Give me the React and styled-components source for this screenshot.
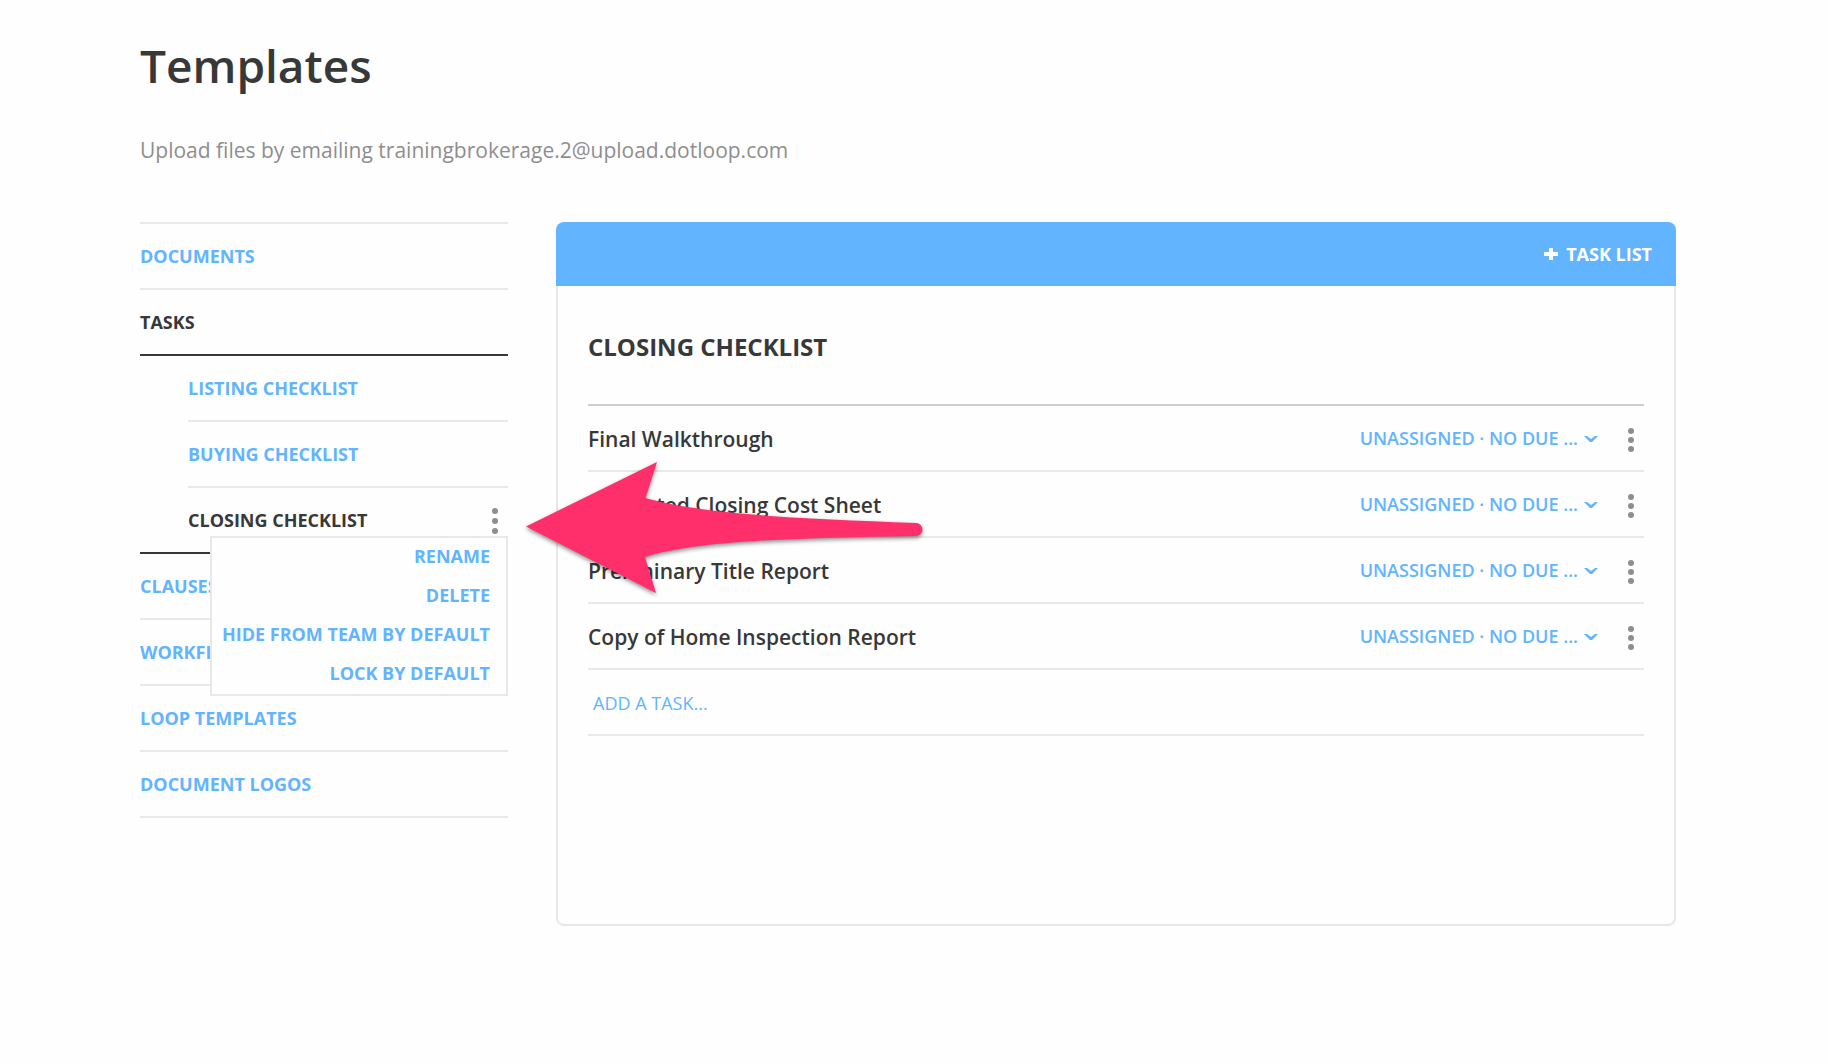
import React from "react";
import styled, { createGlobalStyle } from "styled-components";

const blue = "#62b4ff";
const ink = "#383838";
const line = "#e8e8e8";

const GlobalStyle = createGlobalStyle`
  *, *::before, *::after { box-sizing: border-box; }
  body {
    margin: 0;
    background: #fefefe;
    color: ${ink};
    font-family: "Open Sans", "Noto Sans", sans-serif;
    font-size: 18px;
  }
  button, input { font: inherit; color: inherit; border: 0; padding: 0; margin: 0; background: none; }
  button { cursor: pointer; }
  ul { list-style: none; margin: 0; padding: 0; }
  svg { display: block; flex: none; }
`;

const Page = styled.main`
  padding: 33px 152px 48px 140px;
`;

const Title = styled.h1`
  margin: 0 0 37px;
  font-size: 46px;
  line-height: 64px;
  font-weight: 600;
`;

const Subtitle = styled.p`
  margin: 0 0 56px;
  font-size: 21px;
  line-height: 32px;
  color: #8e8e8e;
`;

const Columns = styled.div`
  display: flex;
  align-items: flex-start;
  gap: 48px;
`;

const Sidebar = styled.nav`
  flex: 0 0 368px;
  border-top: 2px solid ${line};
`;

const NavRow = styled.div`
  position: relative;
  display: flex;
  align-items: center;
  justify-content: space-between;
  height: 66px;
  padding-right: 8px;
  border-bottom: 2px solid ${(p) => (p.$active ? ink : line)};
`;

const NavLink = styled.a`
  color: ${(p) => (p.$active ? ink : blue)};
  font-weight: 700;
  line-height: 24px;
  text-decoration: none;
  text-transform: uppercase;
`;

const SubNav = styled.ul`
  padding-left: 48px;
  border-bottom: 2px solid ${ink};

  > li:last-child > ${NavRow} {
    height: 64px;
    border-bottom: 0;
  }
`;

const IconButton = styled.button`
  display: flex;
  align-items: center;
  justify-content: center;
  width: 10px;
  height: 32px;
  padding-top: 2px;
`;

const Menu = styled.ul`
  position: absolute;
  z-index: 1;
  top: 48px;
  right: 0;
  width: 298px;
  padding: 0 16px 0 8px;
  border: 2px solid ${line};
  background: #fefefe;
`;

const MenuItem = styled.button`
  display: block;
  width: 100%;
  height: 39px;
  padding-bottom: 3px;
  color: ${blue};
  font-weight: 700;
  text-align: right;
  text-transform: uppercase;
  white-space: nowrap;
`;

const Panel = styled.section`
  position: relative;
  flex: 1;
  min-width: 0;
`;

const PanelHeader = styled.header`
  display: flex;
  justify-content: flex-end;
  align-items: center;
  height: 64px;
  padding: 0 24px;
  border-radius: 8px 8px 0 0;
  background: ${blue};
`;

const AddListButton = styled.button`
  display: flex;
  align-items: center;
  gap: 8px;
  color: #fff;
  font-weight: 700;
  line-height: 24px;
`;

const PanelBody = styled.div`
  padding: 45px 30px 188px;
  border: 2px solid ${line};
  border-top: 0;
  border-radius: 0 0 8px 8px;
`;

const ListTitle = styled.h2`
  margin: 0;
  padding-bottom: 41px;
  border-bottom: 2px solid #ccc;
  font-size: 24px;
  line-height: 32px;
  font-weight: 700;
`;

const TaskRow = styled.li`
  display: flex;
  align-items: center;
  height: 66px;
  padding: 2px 8px 0 0;
  border-bottom: 2px solid ${line};
`;

const TaskName = styled.span`
  flex: 1;
  font-size: 21px;
  line-height: 32px;
  font-weight: 600;
`;

const Assignment = styled.button`
  display: flex;
  align-items: center;
  gap: 6px;
  margin-right: 28px;
  padding-bottom: 2px;
  color: ${blue};
  font-weight: 600;
  line-height: 24px;
`;

const TaskInput = styled.input`
  width: 100%;
  height: 32px;
  padding: 0 5px;
  outline: 0;

  &::placeholder {
    color: ${blue};
    opacity: 1;
  }
`;

const Arrow = styled.svg`
  position: absolute;
  z-index: 2;
  top: 230px;
  left: -36px;
  pointer-events: none;
  filter: drop-shadow(0 2px 2px rgba(0, 0, 0, 0.45));
`;

function Dots({ spacing }) {
  const h = spacing * 2 + 6;
  return (
    <svg width="6" height={h} viewBox={`0 0 6 ${h}`} fill="#8e8e8e" aria-hidden="true">
      {[0, 1, 2].map((i) => (
        <circle key={i} cx="3" cy={3 + i * spacing} r="3" />
      ))}
    </svg>
  );
}

function Item({ label, active }) {
  return (
    <li>
      <NavRow $active={active}>
        <NavLink href="#" $active={active}>{label}</NavLink>
      </NavRow>
    </li>
  );
}

const tasks = [
  "Final Walkthrough",
  "Estimated Closing Cost Sheet",
  "Preliminary Title Report",
  "Copy of Home Inspection Report",
];

const actions = ["Rename", "Delete", "Hide from team by default", "Lock by default"];

export default function App() {
  return (
    <>
      <GlobalStyle />
      <Page>
        <Title>Templates</Title>
        <Subtitle>Upload files by emailing trainingbrokerage.2@upload.dotloop.com</Subtitle>
        <Columns>
          <Sidebar aria-label="Template types">
            <ul>
              <Item label="Documents" />
              <Item label="Tasks" active />
              <li>
                <SubNav>
                  <Item label="Listing Checklist" />
                  <Item label="Buying Checklist" />
                  <li>
                    <NavRow>
                      <NavLink href="#" $active>Closing Checklist</NavLink>
                      <IconButton type="button" aria-label="List options" aria-expanded="true">
                        <Dots spacing={10} />
                      </IconButton>
                      <Menu>
                        {actions.map((a) => (
                          <li key={a}>
                            <MenuItem type="button">{a}</MenuItem>
                          </li>
                        ))}
                      </Menu>
                    </NavRow>
                  </li>
                </SubNav>
              </li>
              <Item label="Clauses" />
              <Item label="Workflows" />
              <Item label="Loop Templates" />
              <Item label="Document Logos" />
            </ul>
          </Sidebar>
          <Panel>
            <PanelHeader>
              <AddListButton type="button">
                <svg width="14" height="12" viewBox="0 0 14 12" fill="none" stroke="#fff" strokeWidth="4" aria-hidden="true">
                  <path d="M0 6H14M7 0V12" />
                </svg>
                TASK LIST
              </AddListButton>
            </PanelHeader>
            <PanelBody>
              <ListTitle>CLOSING CHECKLIST</ListTitle>
              <ul>
                {tasks.map((t) => (
                  <TaskRow key={t}>
                    <TaskName>{t}</TaskName>
                    <Assignment type="button">
                      UNASSIGNED · NO DUE ...
                      <svg width="14" height="10" viewBox="0 0 14 10" fill={blue} aria-hidden="true">
                        <path d="M0 3H3L7 6L11 3H14L8 9H6Z" />
                      </svg>
                    </Assignment>
                    <IconButton type="button" aria-label={`Options for ${t}`}>
                      <Dots spacing={9} />
                    </IconButton>
                  </TaskRow>
                ))}
                <TaskRow>
                  <TaskInput type="text" aria-label="Add a task" placeholder="ADD A TASK..." />
                </TaskRow>
              </ul>
            </PanelBody>
            <Arrow width="408" height="152" viewBox="520 452 408 152" aria-hidden="true">
              <path
                fill="#ff2f6c"
                d="M526 526.5L657 462L645.5 498C700 514 800 519 916 523A6.5 6.5 0 0 1 916 536C800 538 700 540 645 557L656 593Z"
              />
            </Arrow>
          </Panel>
        </Columns>
      </Page>
    </>
  );
}
